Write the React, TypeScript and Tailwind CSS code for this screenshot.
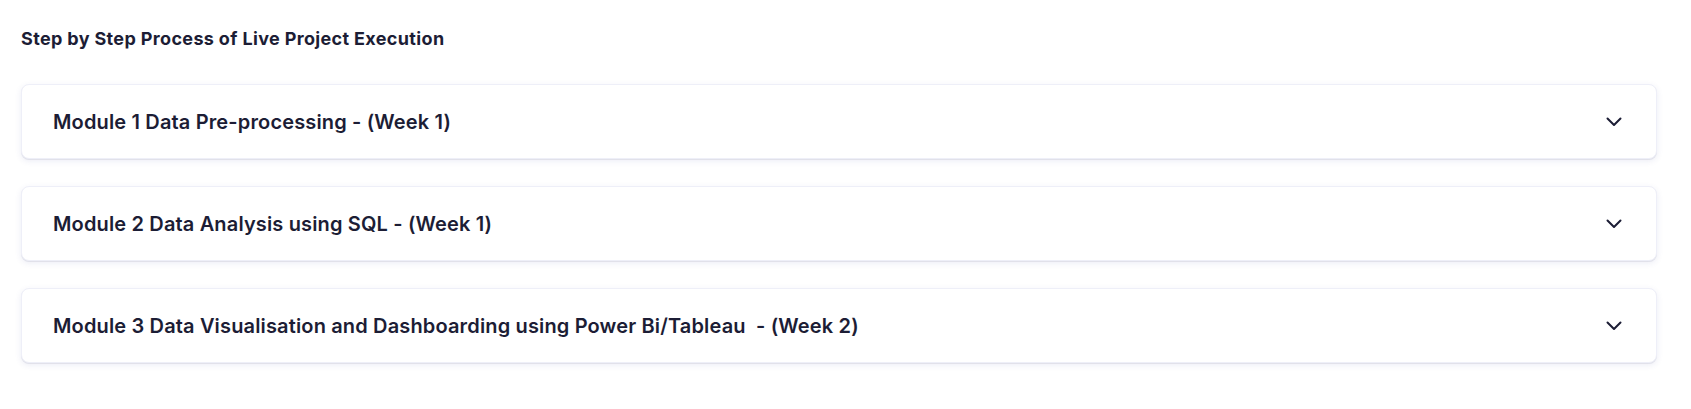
const modules = [
  'Module 1 Data Pre-processing - (Week 1)',
  'Module 2 Data Analysis using SQL - (Week 1)',
  'Module 3 Data Visualisation and Dashboarding using Power Bi/Tableau  - (Week 2)',
];

function Chevron() {
  return (
    <svg width="16" height="10" viewBox="0 0 16 10" fill="none" className="shrink-0">
      <path
        d="M1.5 1.5 8 8l6.5-6.5"
        stroke="#1c1d35"
        strokeWidth="2"
        strokeLinecap="round"
        strokeLinejoin="round"
      />
    </svg>
  );
}

export default function App() {
  return (
    <div
      className="w-full min-h-[409px] bg-white pt-[27px] pl-[21px] pr-[34px]"
      style={{ fontFamily: 'Inter, "Noto Sans", sans-serif' }}
    >
      <h2 className="text-[18px] leading-[24px] font-bold tracking-[0.35px] text-[#1c1d35]">
        Step by Step Process of Live Project Execution
      </h2>
      <div className="mt-[33px] flex flex-col gap-[27px]">
        {modules.map((m) => (
          <div
            key={m}
            className="h-[75px] flex items-center justify-between pl-[31px] pr-[34px] bg-white rounded-[8px] border border-[#eeeff8] shadow-[0_2px_6px_rgba(60,70,160,0.10),0_1px_0_rgba(30,30,80,0.08)]"
          >
            <span className="text-[20px] font-semibold tracking-[0.15px] text-[#1c1d35] whitespace-pre">
              {m}
            </span>
            <Chevron />
          </div>
        ))}
      </div>
    </div>
  );
}
